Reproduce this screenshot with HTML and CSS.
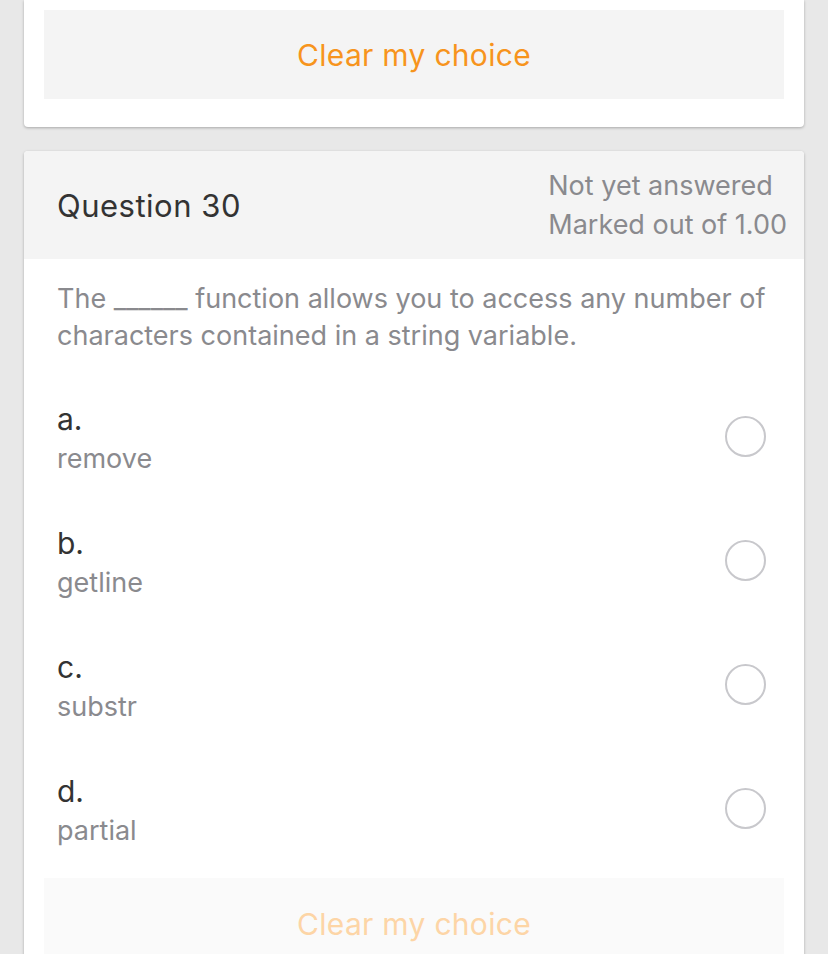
FILE: index.html
```html
<!DOCTYPE html>
<html lang="en">
<head>
<meta charset="utf-8">
<title>Quiz</title>
<link rel="stylesheet" href="styles.css">
</head>
<body>
<div class="page">
  <section class="card card-prev">
    <button class="clear-btn" type="button">Clear my choice</button>
  </section>

  <section class="card">
    <header class="q-header">
      <h2 class="q-title">Question 30</h2>
      <div class="q-info">
        <div>Not yet answered</div>
        <div>Marked out of 1.00</div>
      </div>
    </header>
    <div class="q-body">
      <p class="q-text">The ______ function allows you to access any number of characters contained in a string variable.</p>
      <ul class="answers">
        <li class="answer">
          <div class="answer-text">
            <div class="answer-letter">a.</div>
            <div class="answer-label">remove</div>
          </div>
          <span class="radio"></span>
        </li>
        <li class="answer">
          <div class="answer-text">
            <div class="answer-letter">b.</div>
            <div class="answer-label">getline</div>
          </div>
          <span class="radio"></span>
        </li>
        <li class="answer">
          <div class="answer-text">
            <div class="answer-letter">c.</div>
            <div class="answer-label">substr</div>
          </div>
          <span class="radio"></span>
        </li>
        <li class="answer">
          <div class="answer-text">
            <div class="answer-letter">d.</div>
            <div class="answer-label">partial</div>
          </div>
          <span class="radio"></span>
        </li>
      </ul>
      <button class="clear-btn clear-btn-disabled" type="button">Clear my choice</button>
    </div>
  </section>
</div>
</body>
</html>
```

FILE: styles.css
```css
* { box-sizing: border-box; }

html, body {
  margin: 0;
  padding: 0;
  background: #e8e8e8;
  font-family: Inter, "Noto Sans", sans-serif;
  -webkit-font-smoothing: antialiased;
}

.page {
  padding: 0 24px;
  display: flex;
  flex-direction: column;
  gap: 24px;
}

.card {
  background: #ffffff;
  border-radius: 4px;
  box-shadow: 0 1px 3px rgba(0, 0, 0, 0.28);
  overflow: hidden;
}

.card-prev {
  border-radius: 0 0 4px 4px;
  padding: 10px 20px 28px;
}

.clear-btn {
  display: block;
  width: 100%;
  height: 89px;
  border: 0;
  margin: 0;
  background: #f4f4f4;
  color: #f7941d;
  font-family: inherit;
  font-size: 30px;
  letter-spacing: 0.3px;
  text-align: center;
  padding: 0;
}

.clear-btn-disabled {
  background: #fafafa;
  color: #fdd5a6;
  height: 92px;
  margin-top: 27px;
}

.q-header {
  background: #f4f4f4;
  height: 108px;
  display: flex;
  align-items: center;
  padding: 0 17px 0 33px;
}

.q-title {
  margin: 0;
  font-weight: 400;
  font-size: 31px;
  letter-spacing: 0.5px;
  color: #333333;
}

.q-info {
  margin-left: auto;
  padding-left: 2px;
  color: #8a8a8e;
  font-size: 27px;
  line-height: 39px;
}

.q-body {
  padding: 21px 20px 0;
}

.q-text {
  margin: 0 0 45px;
  padding: 0 13px;
  color: #8a8a8e;
  font-size: 27px;
  line-height: 37px;
}

.answers {
  list-style: none;
  margin: 0;
  padding: 0 18px 0 13px;
  display: flex;
  flex-direction: column;
  gap: 44px;
}

.answer {
  display: flex;
  align-items: center;
  justify-content: space-between;
}

.answer-letter {
  color: #333333;
  font-size: 30px;
  line-height: 40px;
}

.answer-label {
  color: #8a8a8e;
  font-size: 27px;
  line-height: 40px;
}

.radio {
  width: 41px;
  height: 41px;
  border: 2px solid #c8c8cc;
  border-radius: 50%;
  margin-top: -6px;
}
```
